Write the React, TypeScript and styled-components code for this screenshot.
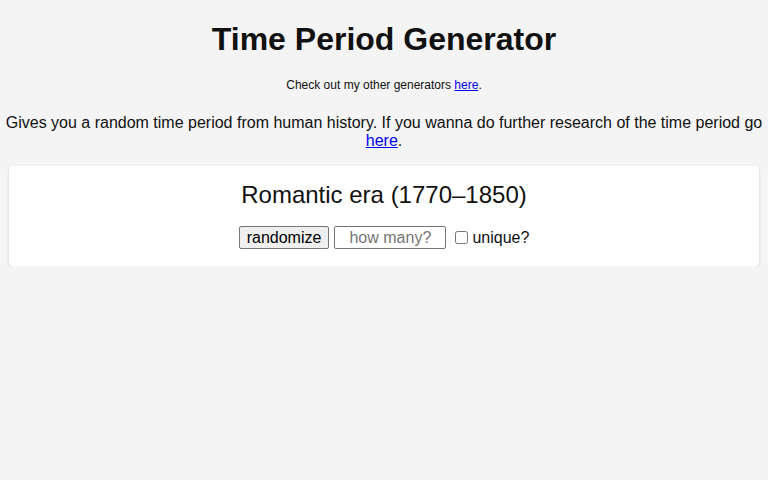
import React from "react";
import styled, { createGlobalStyle } from "styled-components";

const Global = createGlobalStyle`
  html, body { background: #f4f4f4; }
  body {
    margin: 0;
    padding-top: 21px;
    font-family: "Liberation Sans", Arial, sans-serif;
    color: #111;
  }
`;

const Title = styled.h1`
  font-size: 32px;
  font-weight: bold;
  text-align: center;
  margin: 0 0 20px;
`;

const Small = styled.p`
  font-size: 12px;
  text-align: center;
  margin: 0 0 22px;
`;

const Desc = styled.p`
  font-size: 16px;
  line-height: 18px;
  text-align: center;
  margin: 0 0 16px;
`;

const Link = styled.a`
  color: #0000ee;
  text-decoration: underline;
`;

const Card = styled.div`
  background: #fff;
  margin: 0 9px;
  border-radius: 3px;
  box-shadow: 0 1px 3px rgba(0, 0, 0, 0.18);
  padding: 15px 16px 17px;
  text-align: center;
`;

const Result = styled.div`
  font-size: 24px;
  line-height: 28px;
  margin-bottom: 17px;
`;

const Controls = styled.div`
  display: flex;
  justify-content: center;
  align-items: center;
  gap: 5px;
  font-size: 16px;
`;

const Button = styled.button`
  font-family: "Liberation Sans", Arial, sans-serif;
  font-size: 16px;
  height: 23px;
  padding: 0 7px;
  background: #efefef;
  border: 1px solid #767676;
  border-radius: 2px;
  color: #000;
`;

const Input = styled.input`
  font-family: "Liberation Sans", Arial, sans-serif;
  font-size: 16px;
  width: 112px;
  height: 23px;
  box-sizing: border-box;
  border: 1px solid #767676;
  border-radius: 2px;
  text-align: center;
  padding: 0 2px;
  &::placeholder { color: #757575; }
`;

const CheckLabel = styled.label`
  display: inline-flex;
  align-items: center;
  gap: 4px;
  margin-left: 4px;
`;

const Check = styled.input`
  width: 13px;
  height: 13px;
  margin: 0;
`;

export default function App() {
  return (
    <>
      <Global />
      <Title>Time Period Generator</Title>
      <Small>
        Check out my other generators <Link href="#">here</Link>.
      </Small>
      <Desc>
        Gives you a random time period from human history. If you wanna do further research of the time period go{" "}
        <Link href="#">here</Link>.
      </Desc>
      <Card>
        <Result>Romantic era (1770–1850)</Result>
        <Controls>
          <Button>randomize</Button>
          <Input placeholder="how many?" />
          <CheckLabel>
            <Check type="checkbox" />
            unique?
          </CheckLabel>
        </Controls>
      </Card>
    </>
  );
}
